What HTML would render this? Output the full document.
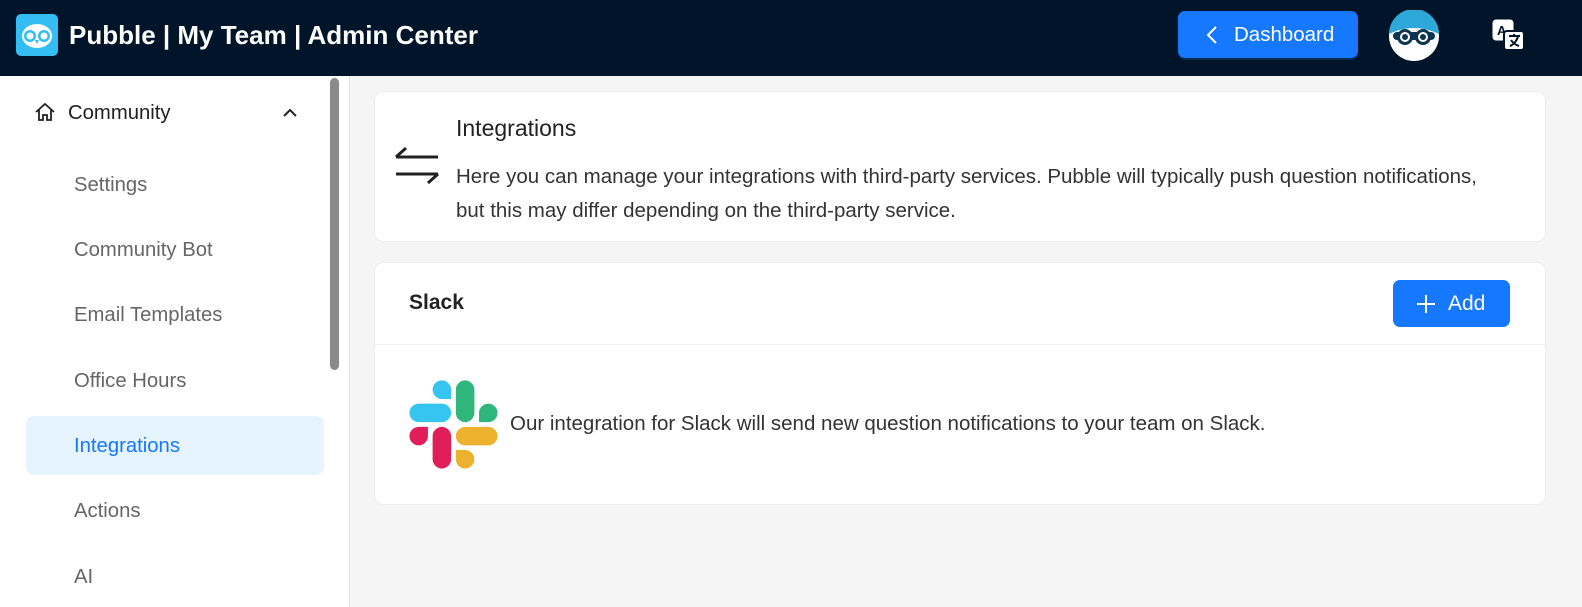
<!DOCTYPE html>
<html><head><meta charset="utf-8"><style>
*{box-sizing:border-box;margin:0;padding:0}
body{width:1582px;height:607px;overflow:hidden;background:#f5f5f5;font-family:"Liberation Sans",sans-serif;position:relative}
.hdr{position:absolute;left:0;top:0;width:1582px;height:76px;background:#01152a}
.title{position:absolute;left:69px;top:20px;color:#fff;font-size:26px;font-weight:bold}
.dash{position:absolute;left:1178px;top:11px;width:180px;height:47px;background:#1677ff;border-radius:7px;color:#fff;font-size:20.5px;line-height:47px;padding-left:56px;box-shadow:0 2px 0 rgba(5,145,255,.2)}
.side{position:absolute;left:0;top:76px;width:350px;height:531px;background:#fff;border-right:1px solid #e5e5e5}
.scroll{position:absolute;left:330px;top:78px;width:9px;height:292px;background:#8a8a8a;border-radius:5px}
.item{position:absolute;left:74px;font-size:20.3px;color:#666}
.act{position:absolute;left:26px;top:416px;width:298px;height:59px;background:#e6f4ff;border-radius:8px}
.card{position:absolute;background:#fff;border-radius:10px;border:1px solid #eee}
</style></head><body>
<div class="hdr"></div>
<svg style="position:absolute;left:16px;top:14px" width="42" height="42" viewBox="0 0 42 42"><rect width="42" height="42" rx="5" fill="#33bdf2"/><ellipse cx="21" cy="22" rx="15" ry="12" fill="#fff"/><circle cx="14" cy="22" r="6" fill="#33bdf2"/><circle cx="28" cy="22" r="6" fill="#33bdf2"/><circle cx="14" cy="22" r="3.5" fill="#fff"/><circle cx="28" cy="22" r="3.5" fill="#fff"/><path d="M19 26l2 4 2-4z" fill="#33bdf2"/></svg>
<div class="title">Pubble | My Team | Admin Center</div>
<div class="dash">Dashboard</div>
<svg style="position:absolute;left:1205px;top:26px" width="14" height="18" viewBox="0 0 14 18"><path d="M11 1L3 9l8 8" stroke="#fff" stroke-width="2" fill="none"/></svg>
<svg style="position:absolute;left:1388px;top:10px" width="52" height="52" viewBox="0 0 52 52"><circle cx="26" cy="26" r="25" fill="#fff"/><path d="M1 24A25 25 0 0 1 51 24Q26 12 1 24z" fill="#2ea8d8"/><rect x="5" y="22" width="42" height="8" rx="4" fill="#0d3550"/><circle cx="17" cy="27" r="8" fill="#0d3550"/><circle cx="35" cy="27" r="8" fill="#0d3550"/><circle cx="17" cy="27" r="5" fill="#fff"/><circle cx="35" cy="27" r="5" fill="#fff"/><circle cx="17" cy="27" r="3" fill="#0d3550"/><circle cx="35" cy="27" r="3" fill="#0d3550"/></svg>
<svg style="position:absolute;left:1492px;top:19px" width="34" height="32" viewBox="0 0 34 32"><rect x="1" y="1" width="20" height="20" rx="3" fill="#fff" stroke="#fff"/><text x="5" y="16" font-size="13" font-weight="bold" fill="#01152a" font-family="Liberation Sans">A</text><rect x="12" y="12" width="20" height="19" rx="3" fill="#fff" stroke="#01152a" stroke-width="2"/><path d="M17 17h11M22 15v2M26 17c-1 5-5 9-8 10M19 21c2 3 5 5 8 6" stroke="#01152a" stroke-width="2" fill="none"/></svg>
<div class="side"></div>
<div class="scroll"></div>
<svg style="position:absolute;left:34px;top:102px" width="22" height="20" viewBox="0 0 22 20"><path d="M2 10L11 2l9 8M5 8v10h4v-5h4v5h4V8" stroke="#222" stroke-width="1.8" fill="none"/></svg>
<div class="item" style="left:68px;top:102px;color:#222">Community</div>
<svg style="position:absolute;left:282px;top:107px" width="16" height="12" viewBox="0 0 16 12"><path d="M2 9l6-6 6 6" stroke="#222" stroke-width="2" fill="none"/></svg>
<div class="item" style="top:174px">Settings</div>
<div class="item" style="top:239px">Community Bot</div>
<div class="item" style="top:304px">Email Templates</div>
<div class="item" style="top:370px">Office Hours</div>
<div class="act"></div>
<div class="item" style="top:435px;color:#1677ff">Integrations</div>
<div class="item" style="top:500px">Actions</div>
<div class="item" style="top:566px">AI</div>
<div class="card" style="left:374px;top:91px;width:1172px;height:151px"></div>
<svg style="position:absolute;left:394px;top:145px" width="46" height="42" viewBox="0 0 46 42"><path d="M2 12h42M2 12l10-9M44 29H2M44 29l-10 9" stroke="#222" stroke-width="3" fill="none"/></svg>
<div style="position:absolute;left:456px;top:115px;font-size:23px;color:#222">Integrations</div>
<div style="position:absolute;left:456px;top:160px;width:1040px;font-size:20.5px;color:#333;line-height:34px">Here you can manage your integrations with third-party services. Pubble will typically push question notifications, but this may differ depending on the third-party service.</div>
<div class="card" style="left:374px;top:262px;width:1172px;height:243px"></div>
<div style="position:absolute;left:375px;top:344px;width:1170px;height:1px;background:#f0f0f0"></div>
<div style="position:absolute;left:409px;top:291px;font-size:21px;font-weight:bold;color:#222">Slack</div>
<div style="position:absolute;left:1393px;top:280px;width:117px;height:47px;background:#1677ff;border-radius:7px;color:#fff;font-size:21px;line-height:47px;padding-left:55px">Add</div>
<svg style="position:absolute;left:1416px;top:294px" width="20" height="20" viewBox="0 0 20 20"><path d="M10 1v18M1 10h18" stroke="#fff" stroke-width="2"/></svg>
<svg style="position:absolute;left:409px;top:380px" width="89" height="89" viewBox="0 0 124 124">
<path fill="#E01E5A" d="M26.4,78.2c0,7.1-5.8,12.9-12.9,12.9S0.6,85.3,0.6,78.2c0-7.1,5.8-12.9,12.9-12.9h12.9V78.2z M32.9,78.2c0-7.1,5.8-12.9,12.9-12.9s12.9,5.8,12.9,12.9v32.3c0,7.1-5.8,12.9-12.9,12.9s-12.9-5.8-12.9-12.9V78.2z"/>
<path fill="#36C5F0" d="M45.8,26.4c-7.1,0-12.9-5.8-12.9-12.9S38.7,0.6,45.8,0.6s12.9,5.8,12.9,12.9v12.9H45.8z M45.8,32.9c7.1,0,12.9,5.8,12.9,12.9s-5.8,12.9-12.9,12.9H13.5c-7.1,0-12.9-5.8-12.9-12.9s5.8-12.9,12.9-12.9H45.8z"/>
<path fill="#2EB67D" d="M97.6,45.8c0-7.1,5.8-12.9,12.9-12.9c7.1,0,12.9,5.8,12.9,12.9s-5.8,12.9-12.9,12.9H97.6V45.8z M91.1,45.8c0,7.1-5.8,12.9-12.9,12.9c-7.1,0-12.9-5.8-12.9-12.9V13.5c0-7.1,5.8-12.9,12.9-12.9c7.1,0,12.9,5.8,12.9,12.9V45.8z"/>
<path fill="#ECB22E" d="M78.2,97.6c7.1,0,12.9,5.8,12.9,12.9c0,7.1-5.8,12.9-12.9,12.9c-7.1,0-12.9-5.8-12.9-12.9V97.6H78.2z M78.2,91.1c-7.1,0-12.9-5.8-12.9-12.9c0-7.1,5.8-12.9,12.9-12.9h32.3c7.1,0,12.9,5.8,12.9,12.9c0,7.1-5.8,12.9-12.9,12.9H78.2z"/>
</svg>
<div style="position:absolute;left:510px;top:412px;font-size:20.5px;color:#333">Our integration for Slack will send new question notifications to your team on Slack.</div>
</body></html>
